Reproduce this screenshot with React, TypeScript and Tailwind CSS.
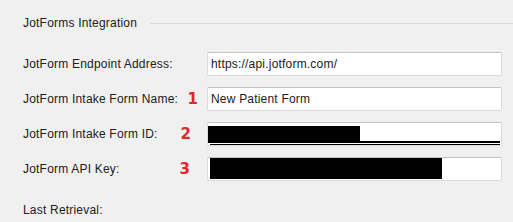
import React from 'react';

type Row = {
  label: string;
  num?: string;
  numGap?: string;
  children: React.ReactNode;
};

function FieldRow({ label, num, numGap, children }: Row) {
  return (
    <div className="flex items-center h-[24px]">
      <div className="flex items-center w-[184px] shrink-0">
        <span className="flex-1 whitespace-nowrap">{label}</span>
        {num && (
          <span
            className={`font-['DejaVu_Sans',sans-serif] font-bold text-[15px] leading-none tracking-normal text-[#e5242c] ${numGap}`}
          >
            {num}
          </span>
        )}
      </div>
      <div className="relative w-[295px] h-[24px] bg-white border border-[#dadada] border-t-[#c2c2c2] rounded-[2px] flex items-center px-[3px] overflow-hidden">
        {children}
      </div>
    </div>
  );
}

export default function App() {
  return (
    <div className="w-[513px] h-[222px] bg-[#f0f0f0] font-['Liberation_Sans',Arial,sans-serif] text-[12px] tracking-[0.2px] text-[#202020] overflow-hidden">
      <div className="flex items-center h-[16px] mt-[15px] pl-[23px]">
        <span className="whitespace-nowrap">JotForms Integration</span>
        <div className="flex-1 ml-[13px] h-px bg-[#dadada]" />
      </div>

      <div className="flex flex-col gap-[11px] pl-[23px] mt-[21px]">
        <FieldRow label="JotForm Endpoint Address:">
          <span>https://api.jotform.com/</span>
        </FieldRow>
        <FieldRow label="JotForm Intake Form Name:" num="1" numGap="mr-[9px]">
          <span>New Patient Form</span>
        </FieldRow>
        <FieldRow label="JotForm Intake Form ID:" num="2" numGap="mr-[16px]">
          <div className="absolute left-0 top-[3px] w-[152px] h-[17px] bg-black" />
          <div className="absolute left-[152px] right-[1px] top-[18px] h-[2px] bg-black" />
          <div className="absolute left-[2px] right-[1px] bottom-0 h-[1px] bg-black" />
        </FieldRow>
        <FieldRow label="JotForm API Key:" num="3" numGap="mr-[17px]">
          <div className="absolute left-[2px] top-0 w-[232px] h-[21px] bg-black" />
        </FieldRow>
      </div>

      <div className="pl-[23px] mt-[20px] whitespace-nowrap">Last Retrieval:</div>
    </div>
  );
}
